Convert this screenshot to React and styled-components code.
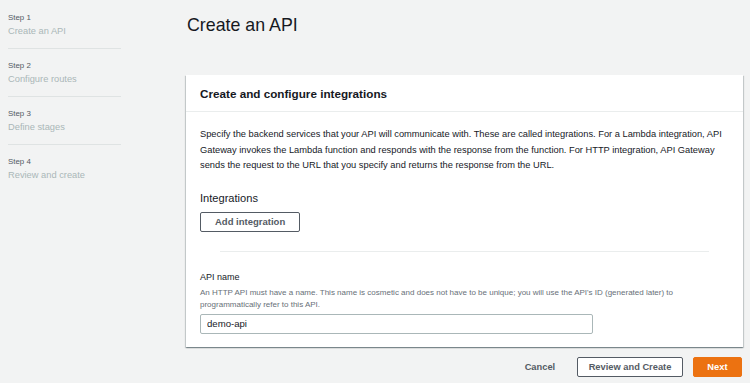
import React from "react";
import styled, { createGlobalStyle } from "styled-components";

const GlobalStyle = createGlobalStyle`
  html, body {
    margin: 0;
    padding: 0;
    background: #f2f3f3;
  }
  body {
    font-family: "Liberation Sans", Arial, sans-serif;
    color: #16191f;
  }
  * {
    box-sizing: border-box;
  }
`;

const Page = styled.div`
  display: flex;
  align-items: flex-start;
  width: 750px;
  min-height: 383px;
`;

const Sidebar = styled.nav`
  width: 121px;
  padding: 1px 0 0 8px;
  flex-shrink: 0;
`;

const StepItem = styled.div`
  padding: 11px 0 10px;
  border-bottom: ${(p) => (p.$last ? "none" : "1px solid #dfe3e3")};
`;

const StepLabel = styled.div`
  font-size: 7.9px;
  line-height: 12px;
  color: #545b64;
`;

const StepName = styled.div`
  font-size: 9.3px;
  line-height: 14px;
  color: #aab7b8;
`;

const Main = styled.main`
  width: 557px;
  margin-left: 65px;
  padding-top: 13px;
`;

const Title = styled.h1`
  margin: 0 0 38px 1px;
  font-size: 17.8px;
  line-height: 24px;
  font-weight: normal;
  color: #16191f;
`;

const Panel = styled.section`
  background: #fff;
  box-shadow: 0 1px 1px 0 rgba(0, 28, 36, 0.3),
    1px 1px 1px 0 rgba(0, 28, 36, 0.15), -1px 1px 1px 0 rgba(0, 28, 36, 0.15);
`;

const PanelHeader = styled.header`
  padding: 11px 14px 10px;
  border-bottom: 1px solid #eaeded;
`;

const PanelTitle = styled.h2`
  margin: 0;
  font-size: 11.7px;
  line-height: 15px;
  font-weight: bold;
`;

const PanelBody = styled.div`
  padding: 15px 8px 13px 14px;
`;

const Description = styled.p`
  margin: 0;
  font-size: 9.3px;
  line-height: 15.5px;
`;

const SectionTitle = styled.h3`
  margin: 17.5px 0 0;
  font-size: 11.1px;
  line-height: 15px;
  font-weight: normal;
`;

const Button = styled.button`
  height: 20px;
  padding: 0 ${(p) => p.$pad || 14}px;
  font-family: inherit;
  font-size: 9.3px;
  font-weight: bold;
  border-radius: 2px;
  cursor: pointer;
  border: 1px solid ${(p) => (p.$primary ? "#ec7211" : p.$plain ? "transparent" : "#545b64")};
  background: ${(p) => (p.$primary ? "#ec7211" : p.$plain ? "transparent" : "#fff")};
  color: ${(p) => (p.$primary ? "#fff" : "#545b64")};
`;

const AddButton = styled(Button)`
  margin-top: 5.5px;
  font-size: 9.5px;
  display: block;
`;

const Divider = styled.hr`
  margin: 19px 26px 0 20px;
  border: none;
  border-top: 1px solid #eaeded;
`;

const FieldLabel = styled.label`
  display: block;
  margin-top: 19.5px;
  font-size: 9px;
  line-height: 13px;
`;

const Hint = styled.div`
  margin-top: 2.5px;
  max-width: 500px;
  font-size: 8px;
  line-height: 12px;
  color: #687078;
`;

const TextInput = styled.input`
  display: block;
  margin-top: 3px;
  width: 393px;
  height: 20px;
  padding: 0 6px;
  font-family: inherit;
  font-size: 9.6px;
  color: #16191f;
  border: 1px solid #aab7b8;
  border-radius: 2px;
  background: #fff;
  outline: none;
`;

const Footer = styled.div`
  display: flex;
  justify-content: flex-end;
  align-items: center;
  gap: 10px;
  margin-top: 10px;
  padding-right: 1px;
`;

const steps = [
  ["Step 1", "Create an API"],
  ["Step 2", "Configure routes"],
  ["Step 3", "Define stages"],
  ["Step 4", "Review and create"],
];

export default function App() {
  return (
    <>
      <GlobalStyle />
      <Page>
        <Sidebar>
          {steps.map(([label, name], i) => (
            <StepItem key={label} $last={i === steps.length - 1}>
              <StepLabel>{label}</StepLabel>
              <StepName>{name}</StepName>
            </StepItem>
          ))}
        </Sidebar>
        <Main>
          <Title>Create an API</Title>
          <Panel>
            <PanelHeader>
              <PanelTitle>Create and configure integrations</PanelTitle>
            </PanelHeader>
            <PanelBody>
              <Description>
                Specify the backend services that your API will communicate
                with. These are called integrations. For a Lambda integration,
                API Gateway invokes the Lambda function and responds with the
                response from the function. For HTTP integration, API Gateway
                sends the request to the URL that you specify and returns the
                response from the URL.
              </Description>
              <SectionTitle>Integrations</SectionTitle>
              <AddButton>Add integration</AddButton>
              <Divider />
              <FieldLabel htmlFor="api-name">API name</FieldLabel>
              <Hint>
                An HTTP API must have a name. This name is cosmetic and does not
                have to be unique; you will use the API's ID (generated later)
                to programmatically refer to this API.
              </Hint>
              <TextInput id="api-name" defaultValue="demo-api" />
            </PanelBody>
          </Panel>
          <Footer>
            <Button $plain $pad={11}>Cancel</Button>
            <Button $pad={10.5}>Review and Create</Button>
            <Button $primary $pad={13.5}>Next</Button>
          </Footer>
        </Main>
      </Page>
    </>
  );
}
